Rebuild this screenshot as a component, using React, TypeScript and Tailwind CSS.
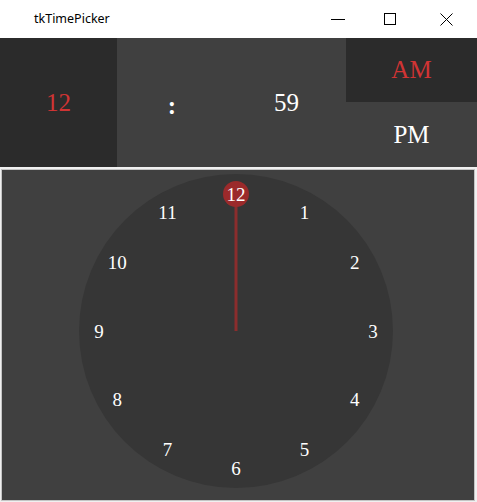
export default function App() {
  const cx = 234;
  const cy = 161;
  const r = 137;
  const nums = Array.from({ length: 12 }, (_, i) => i + 1);

  return (
    <div className="w-[477px] h-[502px] bg-[#f0f0f0] flex flex-col overflow-hidden">
      {/* title bar */}
      <div className="h-[38px] bg-white flex items-center shrink-0">
        <div className="pl-[34px] text-[12.5px] text-black" style={{ fontFamily: '"Noto Sans", sans-serif' }}>
          tkTimePicker
        </div>
        <div className="ml-auto flex h-full">
          <div className="w-[46px] h-full flex items-center justify-center">
            <svg width="14" height="14" viewBox="0 0 14 14">
              <line x1="0" y1="7.5" x2="14" y2="7.5" stroke="#000" strokeWidth="1" />
            </svg>
          </div>
          <div className="w-[58px] h-full flex items-center justify-center">
            <svg width="12" height="12" viewBox="0 0 12 12">
              <rect x="0.5" y="0.5" width="11" height="11" fill="none" stroke="#000" strokeWidth="1" />
            </svg>
          </div>
          <div className="w-[58px] h-full flex items-center justify-center pr-[4px]">
            <svg width="13" height="13" viewBox="0 0 13 13">
              <path d="M0.5 0.5 L12.5 12.5 M12.5 0.5 L0.5 12.5" stroke="#000" strokeWidth="1" />
            </svg>
          </div>
        </div>
      </div>

      {/* time display */}
      <div
        className="h-[129px] bg-[#404040] flex shrink-0 text-[25px]"
        style={{ fontFamily: '"Liberation Serif", "Times New Roman", serif' }}
      >
        <div className="w-[117px] bg-[#2b2b2b] flex items-center justify-center text-[#d03434]">12</div>
        <div className="w-[110px] flex items-center justify-center text-white font-bold pt-[6px]">:</div>
        <div className="w-[119px] flex items-center justify-center text-white">59</div>
        <div className="flex-1 flex flex-col">
          <div className="h-[64px] bg-[#2b2b2b] flex items-center justify-center text-[#d03434]">AM</div>
          <div className="flex-1 flex items-center justify-center text-white">PM</div>
        </div>
      </div>

      {/* clock canvas */}
      <div className="flex-1 pt-[2px] pl-[1px] pr-[2px] pb-[1px]">
        <div className="w-full h-full border border-[#c4c4c4] bg-[#404040]">
          <svg width="472" height="330" viewBox="0 0 472 330" className="block">
            <circle cx={cx} cy={cy} r="157" fill="#363636" />
            <line x1={cx} y1={cy} x2={cx} y2={cy - r} stroke="#8b2d2d" strokeWidth="3" />
            <circle cx={cx} cy={cy - r} r="13" fill="#9b2a2b" />
            {nums.map((n) => {
              const a = (n * 30 * Math.PI) / 180;
              const x = cx + r * Math.sin(a);
              const y = cy - r * Math.cos(a);
              return (
                <text
                  key={n}
                  x={x}
                  y={y}
                  fill="#ffffff"
                  fontSize="19"
                  textAnchor="middle"
                  dominantBaseline="central"
                  style={{ fontFamily: '"Liberation Serif", "Times New Roman", serif' }}
                >
                  {n}
                </text>
              );
            })}
          </svg>
        </div>
      </div>
    </div>
  );
}
